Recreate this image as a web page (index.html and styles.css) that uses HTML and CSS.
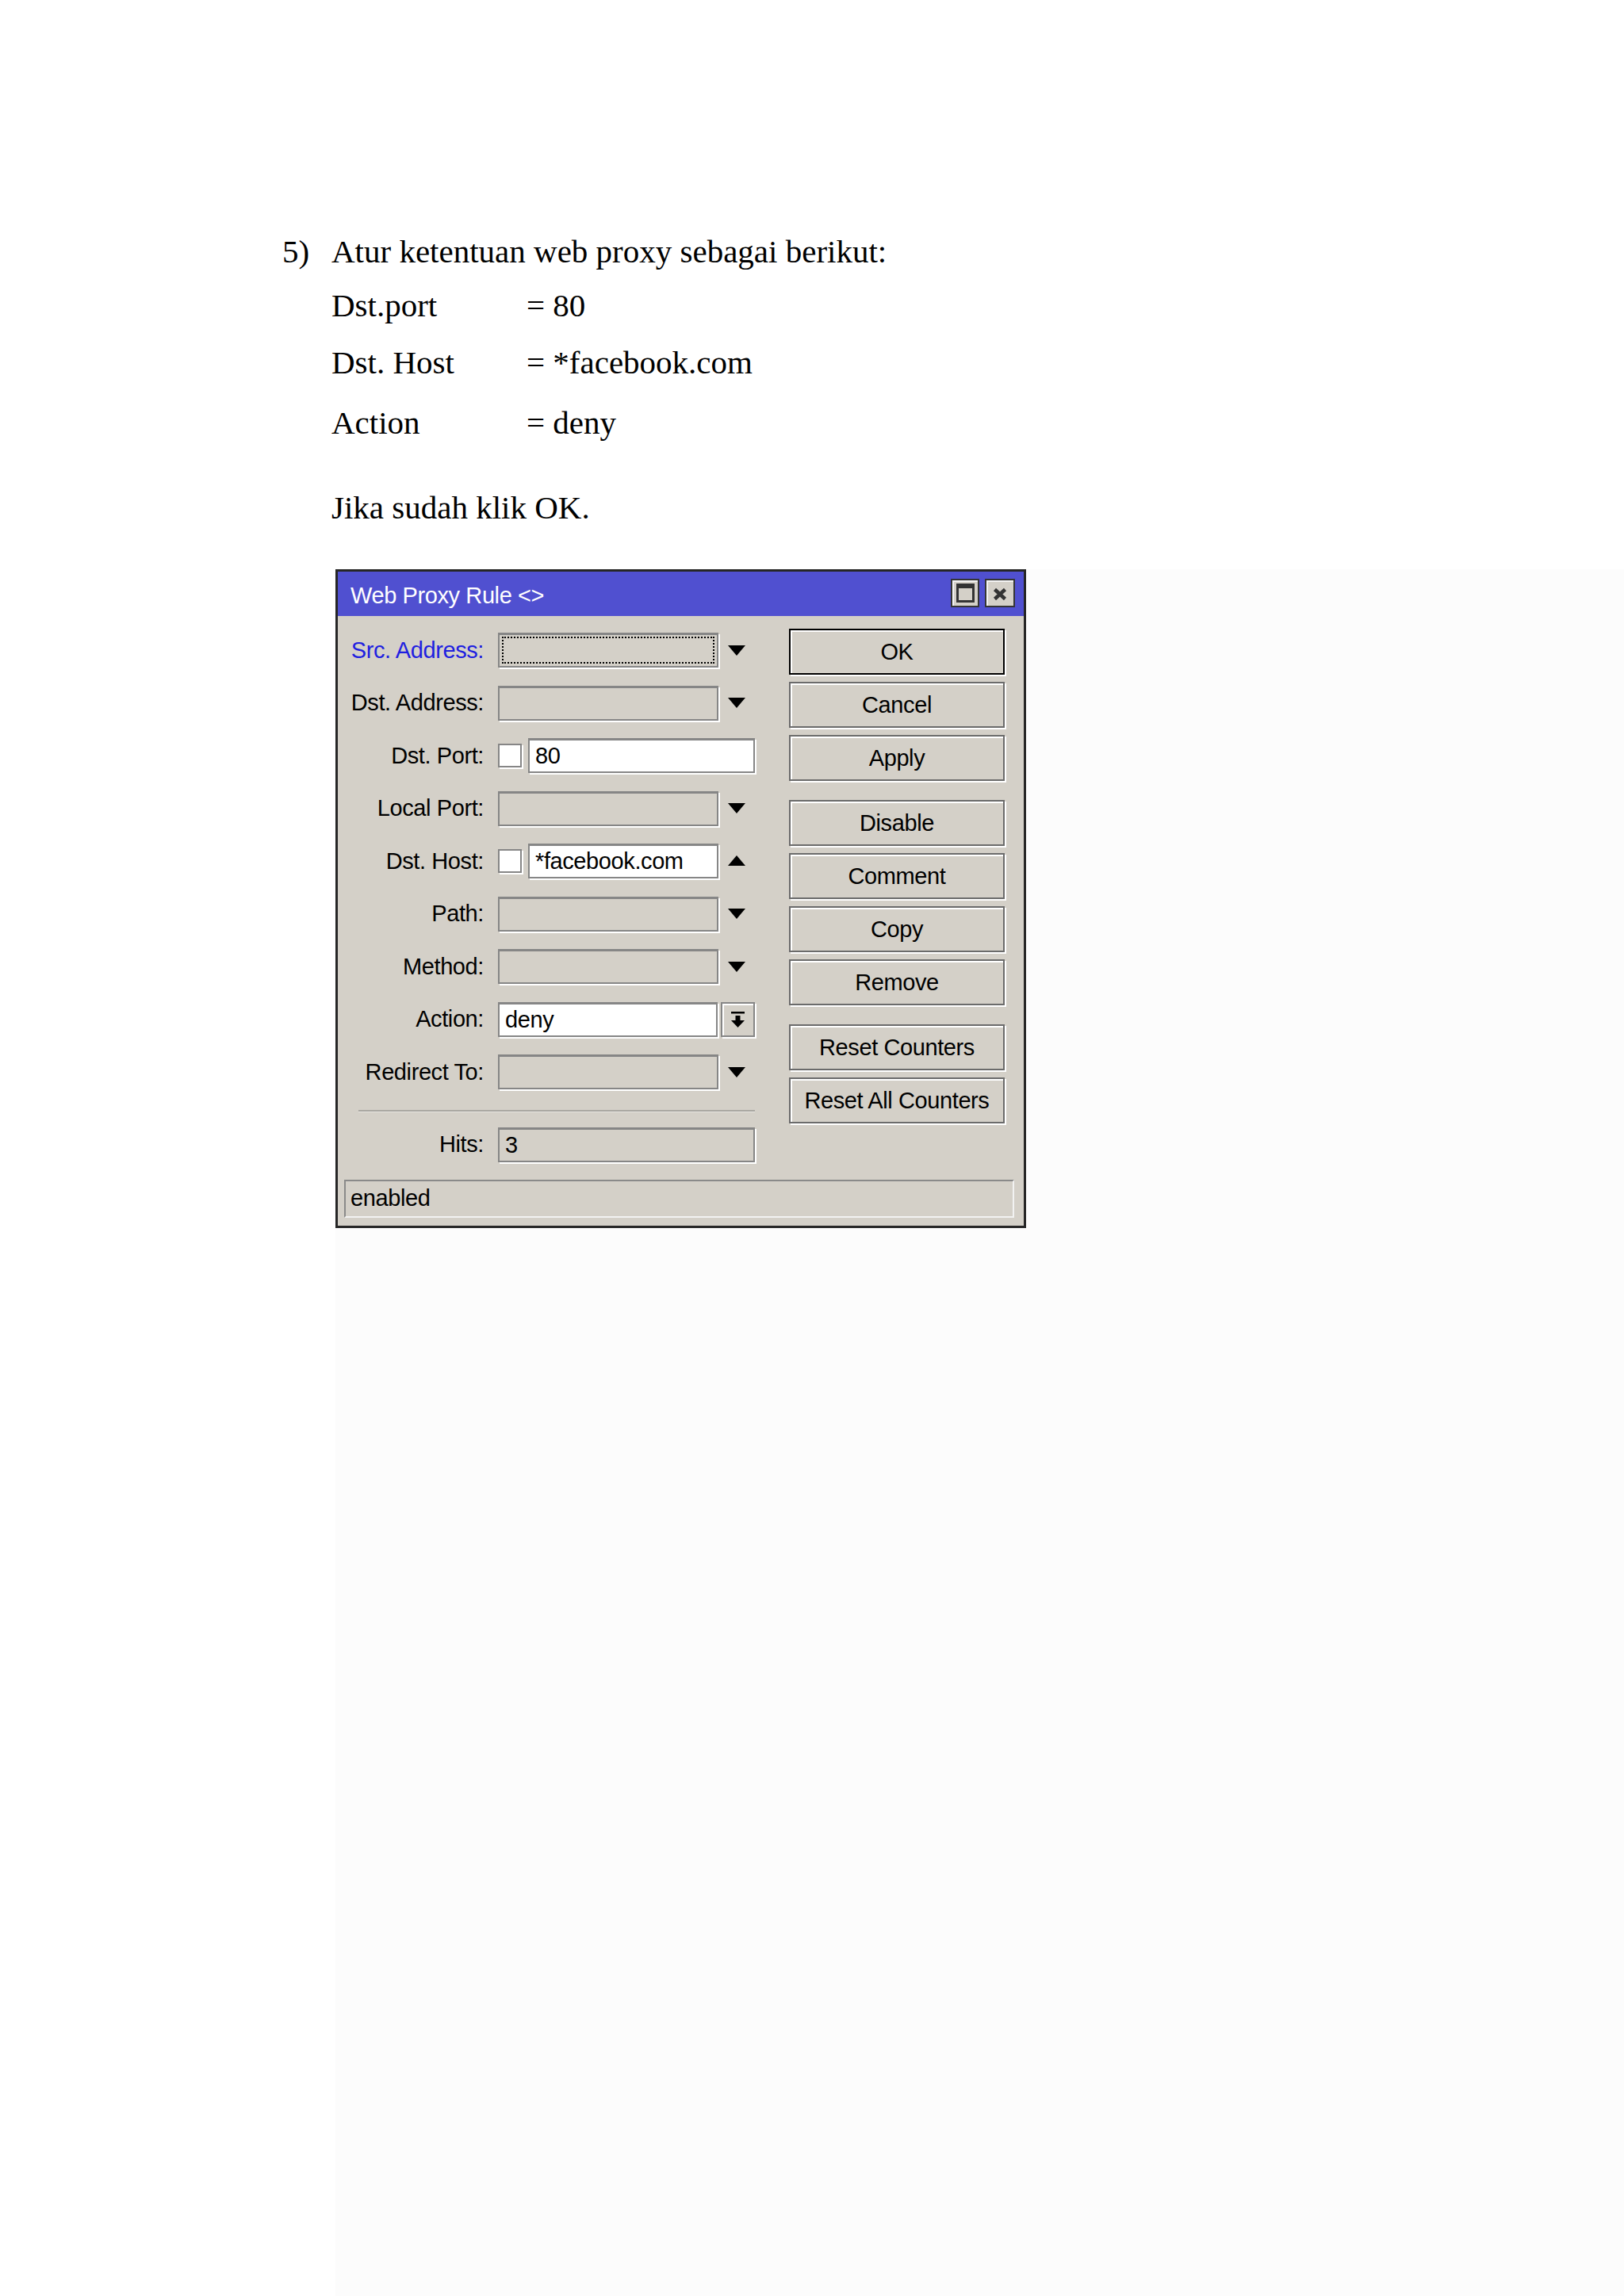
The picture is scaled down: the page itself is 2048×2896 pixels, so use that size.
FILE: index.html
```html
<!DOCTYPE html>
<html lang="id">
<head>
<meta charset="utf-8">
<title>Web Proxy Rule</title>
<link rel="stylesheet" href="styles.css">
</head>
<body>
<div class="doc">
  <div class="line step"><span class="num">5)</span><span>Atur ketentuan web proxy sebagai berikut:</span></div>
  <div class="line kv"><span class="k">Dst.port</span><span>= 80</span></div>
  <div class="line kv kv2"><span class="k">Dst. Host</span><span>= *facebook.com</span></div>
  <div class="line kv kv3"><span class="k">Action</span><span>= deny</span></div>
  <div class="line note">Jika sudah klik OK.</div>
</div>

<div class="figure">
  <div class="window">
    <div class="titlebar">
      <span class="title">Web Proxy Rule &lt;&gt;</span>
      <div class="tbtns">
        <span class="tbtn tmax"><svg width="23" height="24" viewBox="0 0 23 24"><rect x="1.5" y="1.5" width="20" height="21" fill="none" stroke="#333" stroke-width="3"/><rect x="0" y="0" width="23" height="6" fill="#333"/></svg></span>
        <span class="tbtn tclose"><svg width="18" height="17" viewBox="0 0 18 17"><path d="M2.5 2.5 L15.5 14.5 M15.5 2.5 L2.5 14.5" stroke="#333" stroke-width="4.5" fill="none"/></svg></span>
      </div>
    </div>
    <div class="wbody">
      <div class="main">
        <div class="form">
          <div class="row"><span class="lbl blue">Src. Address:</span><div class="field w278 focus"><span class="dots"></span></div><span class="arrow"><span class="tri down"></span></span></div>
          <div class="row"><span class="lbl">Dst. Address:</span><div class="field w278"></div><span class="arrow"><span class="tri down"></span></span></div>
          <div class="row"><span class="lbl">Dst. Port:</span><span class="check"></span><div class="field white w286">80</div></div>
          <div class="row"><span class="lbl">Local Port:</span><div class="field w278"></div><span class="arrow"><span class="tri down"></span></span></div>
          <div class="row"><span class="lbl">Dst. Host:</span><span class="check"></span><div class="field white w240">*facebook.com</div><span class="arrow"><span class="tri up"></span></span></div>
          <div class="row"><span class="lbl">Path:</span><div class="field w278"></div><span class="arrow"><span class="tri down"></span></span></div>
          <div class="row"><span class="lbl">Method:</span><div class="field w278"></div><span class="arrow"><span class="tri down"></span></span></div>
          <div class="row"><span class="lbl">Action:</span><div class="field white w277">deny</div><span class="dropbtn"><svg width="17" height="20" viewBox="0 0 17 20"><rect x="0" y="0" width="17" height="2.5" fill="#000"/><rect x="5.5" y="5" width="6" height="7" fill="#000"/><polygon points="0,11 17,11 8.5,20" fill="#000"/></svg></span></div>
          <div class="row"><span class="lbl">Redirect To:</span><div class="field w278"></div><span class="arrow"><span class="tri down"></span></span></div>
          <div class="sep"></div>
          <div class="row"><span class="lbl">Hits:</span><div class="field w324">3</div></div>
        </div>
        <div class="buttons">
          <div class="btn default">OK</div>
          <div class="btn">Cancel</div>
          <div class="btn">Apply</div>
          <div class="btn group">Disable</div>
          <div class="btn">Comment</div>
          <div class="btn">Copy</div>
          <div class="btn">Remove</div>
          <div class="btn group">Reset Counters</div>
          <div class="btn">Reset All Counters</div>
        </div>
      </div>
      <div class="status">enabled</div>
    </div>
  </div>
</div>
</body>
</html>
```
FILE: styles.css
```css
html, body {
  margin: 0;
  padding: 0;
  background: #ffffff;
}

body {
  width: 2048px;
  min-height: 2896px;
  font-family: "Liberation Serif", "Times New Roman", serif;
  color: #000;
}

.doc {
  padding-top: 283px;
  padding-left: 356px;
  font-size: 41px;
}

.line {
  height: 68px;
  line-height: 68px;
  white-space: nowrap;
}

.step {
  display: flex;
}

.num {
  width: 62px;
}

.kv {
  display: flex;
  padding-left: 62px;
}

.kv2 { margin-top: 4px; }
.kv3 { margin-top: 8px; }

.k {
  width: 246px;
}

.note {
  padding-left: 62px;
  margin-top: 39px;
}

.figure {
  margin-top: 44px;
  margin-left: 423px;
  min-height: 2178px;
  background: #fcfcfc;
}

/* Window */
.window {
  width: 871px;
  box-sizing: border-box;
  border: 3px solid #262626;
  background: #d4d0c8;
  font-family: "Liberation Sans", Arial, sans-serif;
  font-size: 29px;
  letter-spacing: -0.4px;
  color: #000;
}

.titlebar {
  height: 56px;
  background: #5050d0;
  display: flex;
  align-items: center;
  justify-content: space-between;
  padding: 0 11px 0 16px;
}

.title {
  color: #fff;
  padding-top: 4px;
}

.tbtns {
  display: flex;
  gap: 7px;
  margin-top: -2px;
}

.tbtn {
  height: 36px;
  box-sizing: border-box;
  border: 2px solid #353535;
  background: #d4d0c8;
  box-shadow: inset 2px 2px 0 #f4f4f4;
  display: flex;
}

.tmax {
  width: 36px;
  padding: 4px 0 0 5px;
}

.tclose {
  width: 38px;
  padding: 9px 0 0 8px;
}

.wbody {
  padding-bottom: 10px;
}

.main {
  display: flex;
  padding-top: 10px;
}

.form {
  display: flex;
  flex-direction: column;
}

.row {
  height: 66.5px;
  display: flex;
  align-items: center;
}

.lbl {
  width: 184px;
  margin-right: 18px;
  text-align: right;
  white-space: nowrap;
}

.lbl.blue {
  color: #1f1fe0;
}

.field {
  position: relative;
  height: 44px;
  box-sizing: border-box;
  border: 2px solid #868686;
  border-top-width: 3px;
  box-shadow: 2px 2px 0 #ffffff;
  background: #d4d0c8;
  padding-left: 7px;
  line-height: 38px;
  white-space: nowrap;
}

.field.white {
  background: #ffffff;
}

.w278 { width: 278px; }
.w277 { width: 277px; }
.w286 { width: 286px; }
.w240 { width: 240px; }
.w324 { width: 324px; }

.dots {
  position: absolute;
  left: 3px;
  right: 3px;
  top: 2px;
  bottom: 3px;
  border: 2px dotted #000;
}

.check {
  width: 30px;
  height: 30px;
  box-sizing: border-box;
  border: 2px solid #868686;
  background: #fff;
  box-shadow: 2px 2px 0 #ffffff;
  margin-right: 8px;
}

.arrow {
  width: 46px;
  display: flex;
  justify-content: center;
}

.tri {
  width: 0;
  height: 0;
  border-left: 11.5px solid transparent;
  border-right: 11.5px solid transparent;
}

.tri.down {
  border-top: 13px solid #000;
}

.tri.up {
  border-bottom: 13px solid #000;
  margin-top: -2px;
}

.dropbtn {
  width: 43px;
  height: 44px;
  margin-left: 4px;
  box-sizing: border-box;
  border: 2px solid #868686;
  box-shadow: inset 2px 2px 0 #fff, 2px 2px 0 #fff;
  background: #d4d0c8;
  display: flex;
  align-items: center;
  justify-content: center;
}

.sep {
  margin: 14px 0 8px 26px;
  width: 500px;
  height: 0;
  border-top: 2px solid #a9a7a2;
  border-bottom: 1px solid #e6e4df;
}

/* Buttons */
.buttons {
  display: flex;
  flex-direction: column;
  margin-left: 43px;
  margin-top: 6px;
}

.btn {
  width: 272px;
  height: 58px;
  box-sizing: border-box;
  border: 2px solid #6b6b6b;
  box-shadow: inset 2px 2px 0 #ffffff, 2px 2px 0 #ffffff;
  display: flex;
  align-items: center;
  justify-content: center;
  margin-bottom: 9px;
  white-space: nowrap;
}

.btn.default {
  border-color: #000;
}

.btn.group {
  margin-top: 15px;
}

.status {
  margin: 11px 12px 0 8px;
  height: 48px;
  box-sizing: border-box;
  border-top: 2px solid #8a8a8a;
  border-left: 2px solid #8a8a8a;
  border-bottom: 2px solid #f2f2f2;
  border-right: 2px solid #f2f2f2;
  padding-left: 6px;
  line-height: 42px;
}
```
